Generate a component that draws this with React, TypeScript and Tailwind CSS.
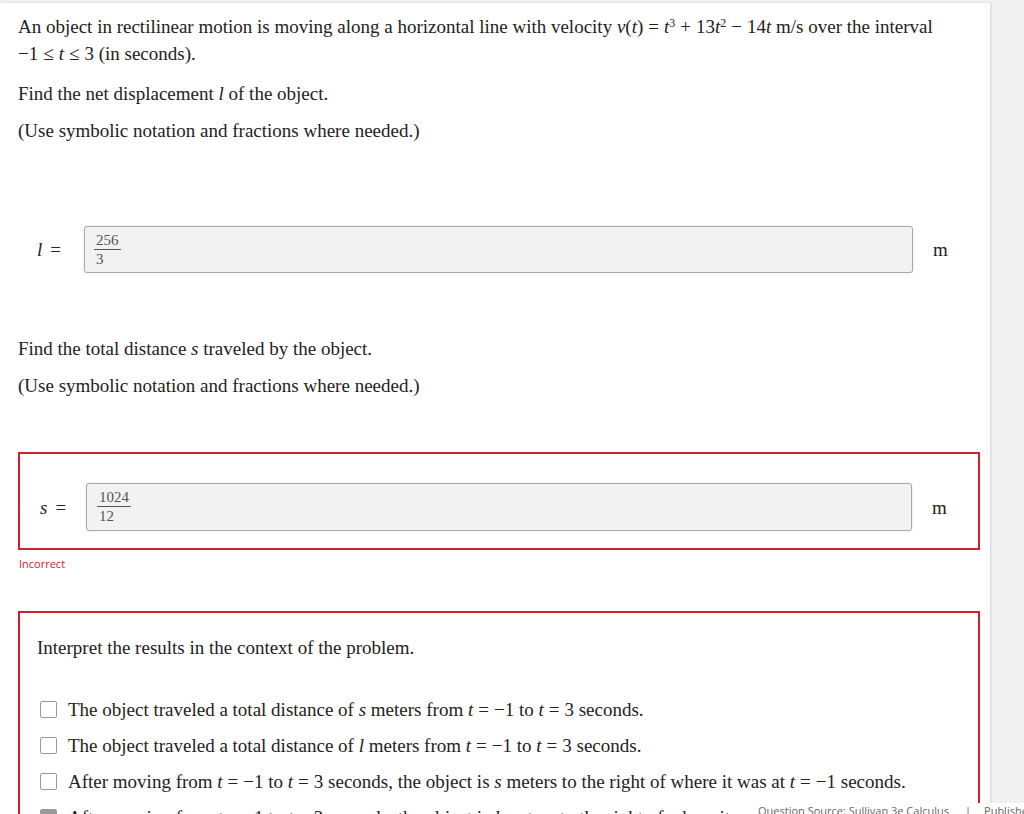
import React from "react";

const I = ({ children }: { children: React.ReactNode }) => <i className="italic">{children}</i>;
const Op = ({ children }: { children: React.ReactNode }) => <span className="mx-[5px]">{children}</span>;

function Frac({ n, d }: { n: string; d: string }) {
  return (
    <span className="inline-flex flex-col items-center text-[15px] leading-[15px] text-[#555]">
      <span className="px-[2px] pb-[1px]">{n}</span>
      <span className="w-full border-t border-[#555] px-[2px] pt-[2px]">{d}</span>
    </span>
  );
}

function AnswerRow({ label, n, d, pl, inputCls }: { label: React.ReactNode; n: string; d: string; pl: string; inputCls: string }) {
  return (
    <div className="flex items-center">
      <div className={pl}>{label}</div>
      <div className={inputCls}>
        <Frac n={n} d={d} />
      </div>
      <div className="ml-[20px]">m</div>
    </div>
  );
}

function Check({ checked, children }: { checked?: boolean; children: React.ReactNode }) {
  return (
    <div className="flex h-[36px] items-center whitespace-nowrap">
      <span className={"ml-[20px] mr-[11px] h-[17px] w-[17px] shrink-0 rounded-[2px] border-[1.5px] border-[#9a9a9a] " + (checked ? "bg-[#9a9a9a]" : "bg-white")} />
      <span>{children}</span>
    </div>
  );
}

export default function App() {
  return (
    <div className="relative h-[814px] w-[1024px] overflow-hidden bg-[#f1f1f1] font-[family-name:Liberation_Serif,Times_New_Roman,serif] text-[19px] leading-[27px] text-[#222]">
      <div className="mt-[3px] h-[811px] w-[990px] overflow-hidden bg-white pl-[18px] pt-[10px] shadow-[1px_0_2px_rgba(0,0,0,0.12)]">
        <p className="whitespace-nowrap">
          An object in rectilinear motion is moving along a horizontal line with velocity <I>v</I>(<I>t</I>)<Op>=</Op><I>t</I>
          <sup className="text-[12px]">3</sup>
          <Op>+</Op>13<I>t</I>
          <sup className="text-[12px]">2</sup>
          <Op>−</Op>14<I>t</I> m/s over the interval
          <br />
          −1<Op>≤</Op><I>t</I><Op>≤</Op>3 (in seconds).
        </p>
        <p className="mt-[13px]">
          Find the net displacement <I>l</I> of the object.
        </p>
        <p className="mt-[10px]">(Use symbolic notation and fractions where needed.)</p>

        <div className="mt-[82px] w-[962px]">
          <AnswerRow
            label={<span><I>l</I><span className="ml-[8px]">=</span></span>}
            n="256"
            d="3"
            pl="w-[66px] pl-[19px]"
            inputCls="flex h-[47px] w-[829px] items-center rounded-[3px] border border-[#aaa] bg-[#f2f2f2] pl-[9px] shadow-[0_0_2px_rgba(0,0,0,0.15)]"
          />
        </div>

        <p className="mt-[62px]">
          Find the total distance <I>s</I> traveled by the object.
        </p>
        <p className="mt-[10px]">(Use symbolic notation and fractions where needed.)</p>

        <div className="mt-[53px] h-[98px] w-[962px] border-2 border-[#d3202f] pt-[29px]">
          <AnswerRow
            label={<span><I>s</I><span className="ml-[8px]">=</span></span>}
            n="1024"
            d="12"
            pl="w-[66px] pl-[20px]"
            inputCls="flex h-[48px] w-[826px] items-center rounded-[3px] border border-[#aaa] bg-[#f2f2f2] pl-[10px] shadow-[0_0_2px_rgba(0,0,0,0.15)]"
          />
        </div>
        <div className="mt-[5px] pl-[1px] font-[family-name:Open_Sans,sans-serif] text-[11px] leading-[18px] text-[#d3202f]">Incorrect</div>

        <div className="mt-[38px] h-[260px] w-[962px] border-2 border-[#d3202f] pt-[21px]">
          <p className="pl-[17px]">Interpret the results in the context of the problem.</p>
          <div className="mt-[30px]">
            <Check>
              The object traveled a total distance of <I>s</I> meters from <I>t</I><Op>=</Op>−1 to <I>t</I><Op>=</Op>3 seconds.
            </Check>
            <Check>
              The object traveled a total distance of <I>l</I> meters from <I>t</I><Op>=</Op>−1 to <I>t</I><Op>=</Op>3 seconds.
            </Check>
            <Check>
              After moving from <I>t</I><Op>=</Op>−1 to <I>t</I><Op>=</Op>3 seconds, the object is <I>s</I> meters to the right of where it was at <I>t</I><Op>=</Op>−1 seconds.
            </Check>
            <Check checked>
              After moving from <I>t</I><Op>=</Op>−1 to <I>t</I><Op>=</Op>3 seconds, the object is <I>l</I> meters to the right of where it was at <I>t</I><Op>=</Op>−1 seconds.
            </Check>
          </div>
        </div>
      </div>

      <div className="absolute left-[745px] top-[803px] h-[11px] w-[279px] overflow-hidden whitespace-nowrap bg-white pl-[13px] font-[family-name:Open_Sans,sans-serif] text-[11px] leading-[15px] text-[#666]">
        Question Source: Sullivan 3e Calculus<span className="ml-[16px] mr-[13px]">|</span>Publisher: W. H. Freeman
      </div>
    </div>
  );
}
